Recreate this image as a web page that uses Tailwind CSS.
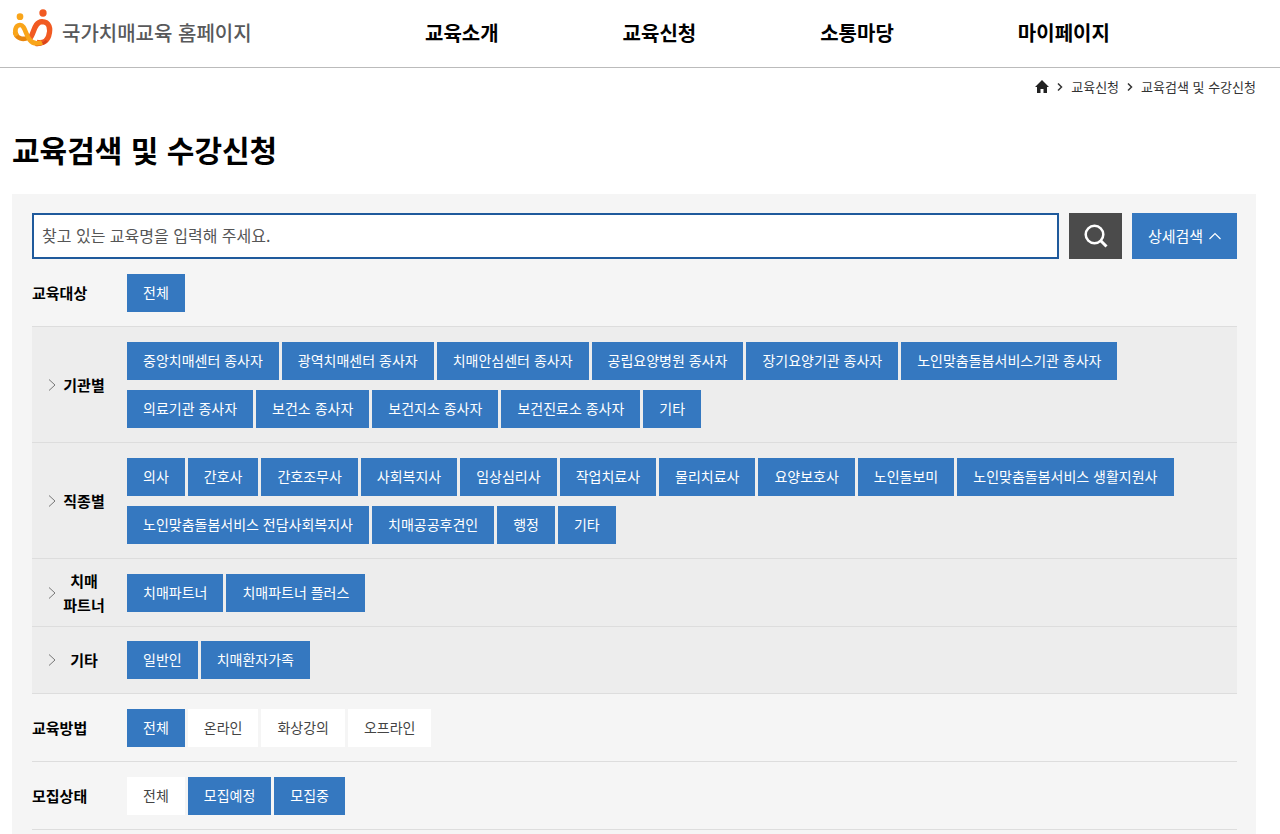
<!DOCTYPE html>
<html lang="ko">

<head>
    <meta charset="UTF-8" />
    <meta name="viewport" content="width=device-width, initial-scale=1.0" />
    <script src="https://cdn.jsdelivr.net/npm/@tailwindcss/browser@4"></script>
    <title>교육검색 및 수강신청</title>
</head>

<body class="bg-white text-black font-['Noto_Sans_CJK_KR',sans-serif]">
    <!-- Header -->
    <header class="flex items-center h-17 pl-3 pb-0.5 border-b border-[#bbbbbb]">
        <a href="#" class="flex items-center gap-2 w-[413px] shrink-0 text-xl font-medium text-[#58595b]">
            <svg class="w-[42px] h-10 mb-2.5" viewBox="0 0 126 120" fill="none" aria-hidden="true">
                <circle cx="24" cy="26" r="10" fill="#f9a51a" />
                <circle cx="93" cy="15" r="11" fill="#f15a22" />
                <path d="M48 88C34 98 14 92 9 72" stroke="#e8860f" stroke-width="14" />
                <path d="M54 90C66 78 66 42 90 41C112 41 117 62 110 84C104 102 90 107 74 103" stroke="#f15a22" stroke-width="16" />
                <path d="M70 110C84 112 96 107 104 98" stroke="#d8431c" stroke-width="8" />
                <path d="M14 84C6 70 10 52 24 51C44 50 40 106 74 106C82 106 86 105 90 103" stroke="#f9a51a" stroke-width="14" />
            </svg>
            <span>국가치매교육 홈페이지</span>
        </a>
        <nav class="flex gap-[124px] text-xl font-bold whitespace-nowrap">
            <a href="#">교육소개</a>
            <a href="#">교육신청</a>
            <a href="#">소통마당</a>
            <a href="#">마이페이지</a>
        </nav>
    </header>

    <main class="pl-3 pr-6">
        <!-- Breadcrumb -->
        <nav class="flex items-center justify-end h-[38px] text-[13px] text-[#333333]" aria-label="breadcrumb">
            <a href="#" aria-label="홈">
                <svg class="w-3.5 h-3.5" viewBox="0 0 14 14" fill="#222222">
                    <path d="M7 0L14 7H12V13H8.500V9H5.500V13H2V7H0Z" />
                </svg>
            </a>
            <svg class="w-1.5 h-2 mx-2" viewBox="0 0 6 8" fill="none" stroke="#333333" stroke-width="1.500">
                <path d="M1 0.500L4.500 4L1 7.500" />
            </svg>
            <a href="#">교육신청</a>
            <svg class="w-1.5 h-2 mx-2" viewBox="0 0 6 8" fill="none" stroke="#333333" stroke-width="1.500">
                <path d="M1 0.500L4.500 4L1 7.500" />
            </svg>
            <a href="#">교육검색 및 수강신청</a>
        </nav>

        <h1 class="mt-5 mb-[22px] text-[30px] leading-[46px] font-bold">교육검색 및 수강신청</h1>

        <!-- Search panel -->
        <form class="bg-[#f5f5f5] pl-5 pr-[19px] pt-[19px] pb-5">
            <div class="flex gap-2.5">
                <input type="text" aria-label="교육명" placeholder="찾고 있는 교육명을 입력해 주세요."
                    class="flex-1 min-w-0 h-[46px] px-2 pb-0.5 bg-white border-2 border-[#1f5a9c] text-base placeholder:text-[#555555]" />
                <button type="button" aria-label="검색" class="flex items-center justify-center w-[53px] bg-[#4b4b4b]">
                    <svg class="w-6 h-6" viewBox="0 0 24 24" fill="none" stroke="#ffffff" stroke-width="2.500">
                        <circle cx="10.500" cy="10.500" r="8.800" />
                        <path d="M16.500 16.500L22.500 22.500" stroke-width="3" />
                    </svg>
                </button>
                <button type="button" class="flex items-center justify-center gap-1.5 w-[105px] bg-[#3578c0] text-white text-[15px]">
                    상세검색
                    <svg class="w-3 h-2" viewBox="0 0 12 8" fill="none" stroke="#ffffff" stroke-width="1.200">
                        <path d="M0.500 7L6 1.500L11.500 7" />
                    </svg>
                </button>
            </div>

            <div role="group" aria-labelledby="target" class="flex items-center pt-[15px] pb-3.5 border-b border-[#dddddd]">
                <h2 id="target" class="w-[95px] shrink-0 font-bold text-[15px] leading-6">교육대상</h2>
                <div class="flex flex-wrap gap-x-[3px] gap-y-2.5 text-sm text-white">
                    <button type="button" class="h-[38px] px-4 pb-0.5 bg-[#3578c0]">전체</button>
                </div>
            </div>

            <div role="group" aria-labelledby="org" class="flex items-center pt-[15px] pb-3.5 bg-[#ededed] border-b border-[#dddddd]">
                <div class="flex items-center w-[95px] shrink-0 pl-4">
                    <svg class="w-2 h-3" viewBox="0 0 8 12" fill="none" stroke="#777777"><path d="M1 0.500L7 6L1 11.500" /></svg>
                    <h3 id="org" class="w-14 text-center font-bold text-[15px] leading-6">기관별</h3>
                </div>
                <div class="flex flex-wrap gap-x-[3px] gap-y-2.5 text-sm text-white">
                    <button type="button" class="h-[38px] px-4 pb-0.5 bg-[#3578c0]">중앙치매센터 종사자</button>
                    <button type="button" class="h-[38px] px-4 pb-0.5 bg-[#3578c0]">광역치매센터 종사자</button>
                    <button type="button" class="h-[38px] px-4 pb-0.5 bg-[#3578c0]">치매안심센터 종사자</button>
                    <button type="button" class="h-[38px] px-4 pb-0.5 bg-[#3578c0]">공립요양병원 종사자</button>
                    <button type="button" class="h-[38px] px-4 pb-0.5 bg-[#3578c0]">장기요양기관 종사자</button>
                    <button type="button" class="h-[38px] px-4 pb-0.5 bg-[#3578c0]">노인맞춤돌봄서비스기관 종사자</button>
                    <button type="button" class="h-[38px] px-4 pb-0.5 bg-[#3578c0]">의료기관 종사자</button>
                    <button type="button" class="h-[38px] px-4 pb-0.5 bg-[#3578c0]">보건소 종사자</button>
                    <button type="button" class="h-[38px] px-4 pb-0.5 bg-[#3578c0]">보건지소 종사자</button>
                    <button type="button" class="h-[38px] px-4 pb-0.5 bg-[#3578c0]">보건진료소 종사자</button>
                    <button type="button" class="h-[38px] px-4 pb-0.5 bg-[#3578c0]">기타</button>
                </div>
            </div>

            <div role="group" aria-labelledby="job" class="flex items-center pt-[15px] pb-3.5 bg-[#ededed] border-b border-[#dddddd]">
                <div class="flex items-center w-[95px] shrink-0 pl-4">
                    <svg class="w-2 h-3" viewBox="0 0 8 12" fill="none" stroke="#777777"><path d="M1 0.500L7 6L1 11.500" /></svg>
                    <h3 id="job" class="w-14 text-center font-bold text-[15px] leading-6">직종별</h3>
                </div>
                <div class="flex flex-wrap gap-x-[3px] gap-y-2.5 text-sm text-white">
                    <button type="button" class="h-[38px] px-4 pb-0.5 bg-[#3578c0]">의사</button>
                    <button type="button" class="h-[38px] px-4 pb-0.5 bg-[#3578c0]">간호사</button>
                    <button type="button" class="h-[38px] px-4 pb-0.5 bg-[#3578c0]">간호조무사</button>
                    <button type="button" class="h-[38px] px-4 pb-0.5 bg-[#3578c0]">사회복지사</button>
                    <button type="button" class="h-[38px] px-4 pb-0.5 bg-[#3578c0]">임상심리사</button>
                    <button type="button" class="h-[38px] px-4 pb-0.5 bg-[#3578c0]">작업치료사</button>
                    <button type="button" class="h-[38px] px-4 pb-0.5 bg-[#3578c0]">물리치료사</button>
                    <button type="button" class="h-[38px] px-4 pb-0.5 bg-[#3578c0]">요양보호사</button>
                    <button type="button" class="h-[38px] px-4 pb-0.5 bg-[#3578c0]">노인돌보미</button>
                    <button type="button" class="h-[38px] px-4 pb-0.5 bg-[#3578c0]">노인맞춤돌봄서비스 생활지원사</button>
                    <button type="button" class="h-[38px] px-4 pb-0.5 bg-[#3578c0]">노인맞춤돌봄서비스 전담사회복지사</button>
                    <button type="button" class="h-[38px] px-4 pb-0.5 bg-[#3578c0]">치매공공후견인</button>
                    <button type="button" class="h-[38px] px-4 pb-0.5 bg-[#3578c0]">행정</button>
                    <button type="button" class="h-[38px] px-4 pb-0.5 bg-[#3578c0]">기타</button>
                </div>
            </div>

            <div role="group" aria-labelledby="partner" class="flex items-center h-17 bg-[#ededed] border-b border-[#dddddd]">
                <div class="flex items-center w-[95px] shrink-0 pl-4">
                    <svg class="w-2 h-3" viewBox="0 0 8 12" fill="none" stroke="#777777"><path d="M1 0.500L7 6L1 11.500" /></svg>
                    <h3 id="partner" class="w-14 text-center font-bold text-[15px] leading-6">치매<br />파트너</h3>
                </div>
                <div class="flex flex-wrap gap-x-[3px] gap-y-2.5 text-sm text-white">
                    <button type="button" class="h-[38px] px-4 pb-0.5 bg-[#3578c0]">치매파트너</button>
                    <button type="button" class="h-[38px] px-4 pb-0.5 bg-[#3578c0]">치매파트너 플러스</button>
                </div>
            </div>

            <div role="group" aria-labelledby="etc" class="flex items-center py-3.5 bg-[#ededed] border-b border-[#dddddd]">
                <div class="flex items-center w-[95px] shrink-0 pl-4">
                    <svg class="w-2 h-3" viewBox="0 0 8 12" fill="none" stroke="#777777"><path d="M1 0.500L7 6L1 11.500" /></svg>
                    <h3 id="etc" class="w-14 text-center font-bold text-[15px] leading-6">기타</h3>
                </div>
                <div class="flex flex-wrap gap-x-[3px] gap-y-2.5 text-sm text-white">
                    <button type="button" class="h-[38px] px-4 pb-0.5 bg-[#3578c0]">일반인</button>
                    <button type="button" class="h-[38px] px-4 pb-0.5 bg-[#3578c0]">치매환자가족</button>
                </div>
            </div>

            <div role="group" aria-labelledby="method" class="flex items-center pt-[15px] pb-3.5 border-b border-[#dddddd]">
                <h2 id="method" class="w-[95px] shrink-0 font-bold text-[15px] leading-6">교육방법</h2>
                <div class="flex flex-wrap gap-x-[3px] gap-y-2.5 text-sm text-[#444444]">
                    <button type="button" class="h-[38px] px-4 pb-0.5 bg-[#3578c0] text-white">전체</button>
                    <button type="button" class="h-[38px] px-4 pb-0.5 bg-white">온라인</button>
                    <button type="button" class="h-[38px] px-4 pb-0.5 bg-white">화상강의</button>
                    <button type="button" class="h-[38px] px-4 pb-0.5 bg-white">오프라인</button>
                </div>
            </div>

            <div role="group" aria-labelledby="status" class="flex items-center pt-[15px] pb-3.5 border-b border-[#dddddd]">
                <h2 id="status" class="w-[95px] shrink-0 font-bold text-[15px] leading-6">모집상태</h2>
                <div class="flex flex-wrap gap-x-[3px] gap-y-2.5 text-sm text-[#444444]">
                    <button type="button" class="h-[38px] px-4 pb-0.5 bg-white">전체</button>
                    <button type="button" class="h-[38px] px-4 pb-0.5 bg-[#3578c0] text-white">모집예정</button>
                    <button type="button" class="h-[38px] px-4 pb-0.5 bg-[#3578c0] text-white">모집중</button>
                </div>
            </div>
        </form>
    </main>
</body>

</html>
